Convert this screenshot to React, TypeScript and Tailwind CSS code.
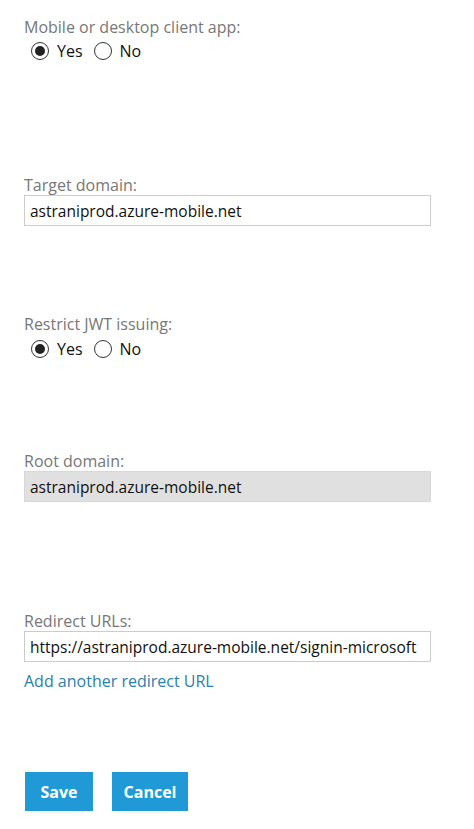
import React, { useState } from "react";

function Radio({ checked, label, onClick }: { checked: boolean; label: string; onClick: () => void }) {
  return (
    <label className="flex items-center cursor-pointer" onClick={onClick}>
      <span className="w-[18px] h-[18px] rounded-full border border-[#333] bg-white flex items-center justify-center">
        {checked && <span className="w-[10px] h-[10px] rounded-full bg-[#222]" />}
      </span>
      <span className="ml-[8px] text-[#111]">{label}</span>
    </label>
  );
}

function YesNo() {
  const [yes, setYes] = useState(true);
  return (
    <div className="flex items-center h-[20px] pl-[7px] gap-[11px]">
      <Radio checked={yes} label="Yes" onClick={() => setYes(true)} />
      <Radio checked={!yes} label="No" onClick={() => setYes(false)} />
    </div>
  );
}

function Label({ children }: { children: React.ReactNode }) {
  return <div className="text-[#777] h-[20px]">{children}</div>;
}

export default function App() {
  return (
    <div
      className="w-[474px] h-[829px] bg-white px-[24px] pt-[17px] text-[16px] leading-[20px]"
      style={{ fontFamily: '"Open Sans", "Liberation Sans", sans-serif' }}
    >
      <Label>Mobile or desktop client app:</Label>
      <div className="mt-[4px]"><YesNo /></div>

      <div className="mt-[114px]">
        <Label>Target domain:</Label>
        <input
          className="block w-[407px] h-[31px] border border-[#ccc] px-[5px] text-[15.5px] text-[#111] outline-none"
          defaultValue="astraniprod.azure-mobile.net"
        />
      </div>

      <div className="mt-[88px]">
        <Label>Restrict JWT issuing:</Label>
        <div className="mt-[5px]"><YesNo /></div>
      </div>

      <div className="mt-[92px]">
        <Label>Root domain:</Label>
        <div className="w-[407px] h-[31px] bg-[#e0e0e0] border border-[#d8d8d8] px-[5px] flex items-center text-[15.5px] text-[#111]">
          astraniprod.azure-mobile.net
        </div>
      </div>

      <div className="mt-[109px]">
        <Label>Redirect URLs:</Label>
        <input
          className="block w-[407px] h-[31px] border border-[#ccc] px-[5px] text-[15.5px] text-[#111] outline-none"
          defaultValue="https://astraniprod.azure-mobile.net/signin-microsoft"
        />
        <a href="#" className="block mt-[9px] text-[#2a7fab]">Add another redirect URL</a>
      </div>

      <div className="mt-[81px] flex gap-[19px] pl-[1px]">
        <button className="w-[68px] h-[39px] bg-[#1f9ad7] text-white font-bold">Save</button>
        <button className="w-[76px] h-[39px] bg-[#1f9ad7] text-white font-bold">Cancel</button>
      </div>
    </div>
  );
}
